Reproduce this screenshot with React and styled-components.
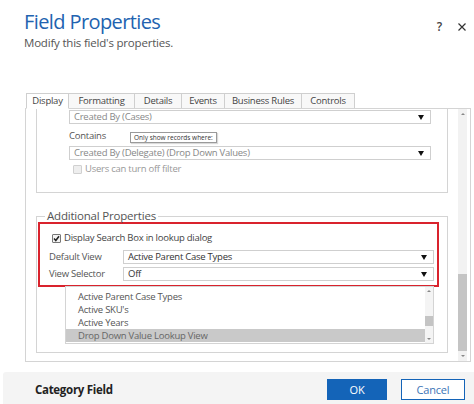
import React from "react";
import styled, { createGlobalStyle } from "styled-components";

const Global = createGlobalStyle`
  html, body { margin: 0; padding: 0; background: #fff; }
  body { font-family: "Open Sans", "Noto Sans", sans-serif; }
  * { box-sizing: border-box; }
`;

const Frame = styled.div`
  width: 474px;
  height: 404px;
  overflow: hidden;
  background: #fff;
  display: flex;
  flex-direction: column;
  color: #555;
  letter-spacing: -0.25px;
`;

const Header = styled.header`
  display: flex;
  justify-content: space-between;
  align-items: flex-start;
  padding: 9px 8px 0 24px;
  height: 92px;
`;

const Title = styled.h1`
  margin: 0;
  font-weight: 400;
  font-size: 20px;
  line-height: 26px;
  letter-spacing: -0.6px;
  color: #2263b0;
`;

const Subtitle = styled.p`
  margin: 0;
  font-size: 11.5px;
  line-height: 15px;
  letter-spacing: -0.2px;
  color: #555;
`;

const HeaderIcons = styled.div`
  display: flex;
  gap: 16px;
  margin-top: 12px;
  align-items: center;
`;

const IconButton = styled.span`
  font-size: 12px;
  font-weight: 600;
  line-height: 12px;
  color: #444;
  display: flex;
  align-items: center;
`;

const TabRow = styled.div`
  display: flex;
  padding-left: 27px;
  height: 16px;
  align-items: flex-end;
`;

const Tab = styled.div`
  width: ${(p) => p.$w}px;
  height: ${(p) => (p.$active ? "16px" : "15px")};
  border: 1px solid #cfcfcf;
  border-bottom: ${(p) => (p.$active ? "1px solid #fff" : "none")};
  margin-left: -1px;
  background: ${(p) => (p.$active ? "#fff" : "#f8f8f8")};
  font-size: 9.5px;
  line-height: 14px;
  text-align: center;
  color: #444;
  position: relative;
  z-index: ${(p) => (p.$active ? 2 : 1)};
  margin-bottom: ${(p) => (p.$active ? "-1px" : "0")};
`;

const Panel = styled.div`
  margin-left: 25px;
  width: 446px;
  height: 254px;
  border: 1px solid #d4d4d4;
  display: flex;
  overflow: hidden;
`;

const ScrollArea = styled.div`
  width: 431px;
  padding-left: 10px;
  display: flex;
  flex-direction: column;
`;

const FilterBox = styled.div`
  width: 412px;
  height: 84px;
  border: 1px solid #d4d4d4;
  border-top: none;
  padding: 1px 0 0 32px;
  display: flex;
  flex-direction: column;
`;

const Select = styled.div`
  width: ${(p) => p.$w}px;
  height: 14px;
  border: 1px solid #cfcfcf;
  background: #fff;
  display: flex;
  align-items: center;
  justify-content: space-between;
  padding: 0 6px 0 4px;
  font-size: 9.5px;
  line-height: 12px;
  color: ${(p) => (p.$muted ? "#888" : "#333")};
`;

const Arrow = styled.span`
  width: 0;
  height: 0;
  border-left: 3px solid transparent;
  border-right: 3px solid transparent;
  border-top: 5px solid #111;
`;

const FieldLabel = styled.div`
  position: relative;
  font-size: 9.5px;
  line-height: 14px;
  color: #555;
  margin: 5px 0 3px;
`;

const Tooltip = styled.span`
  position: absolute;
  left: 61px;
  top: 3px;
  height: 11px;
  padding: 0 3px;
  border: 1px solid #9a9a9a;
  background: #fff;
  font-size: 6.5px;
  line-height: 9px;
  letter-spacing: 0;
  color: #333;
  box-shadow: 1px 1px 1px rgba(0, 0, 0, 0.15);
  white-space: nowrap;
`;

const CheckRow = styled.label`
  display: flex;
  align-items: center;
  gap: 3px;
  height: 12px;
  margin: ${(p) => p.$m};
  font-size: 9.5px;
  line-height: 12px;
  color: ${(p) => (p.$disabled ? "#999" : "#444")};
`;

const Box = styled.span`
  width: 9px;
  height: 9px;
  border: 1px solid ${(p) => (p.$disabled ? "#d0d0d0" : "#777")};
  background: ${(p) => (p.$disabled ? "#eee" : "#f4f4f4")};
  border-radius: 1px;
  display: flex;
  align-items: center;
  justify-content: center;
`;

const Fieldset = styled.fieldset`
  margin: 17px 0 0 0;
  padding: 0;
  width: 412px;
  height: 143px;
  border: 1px solid #d4d4d4;
`;

const Legend = styled.legend`
  margin-left: 8px;
  padding: 0 2px;
  font-size: 11.5px;
  line-height: 12px;
  letter-spacing: -0.2px;
  color: #555;
`;

const Highlight = styled.div`
  margin: 0 0 0 1px;
  width: 401px;
  height: 65px;
  border: 2px solid #d9232d;
  padding: 8px 3px 0 9px;
  display: flex;
  flex-direction: column;
`;

const FormRow = styled.div`
  display: flex;
  align-items: center;
  margin-top: ${(p) => p.$mt}px;
`;

const RowLabel = styled.span`
  width: 74px;
  font-size: 9.5px;
  line-height: 12px;
  color: #555;
`;

const ListBox = styled.div`
  margin: -1px 0 0 28px;
  width: 369px;
  height: 58px;
  border: 1px solid #d4d4d4;
  display: flex;
  background: #fff;
`;

const ListItems = styled.ul`
  flex: 1;
  list-style: none;
  margin: 0;
  padding: 3px 0 0 0;
`;

const ListItem = styled.li`
  height: 13px;
  padding-left: 12px;
  font-size: 9.5px;
  line-height: 13px;
  color: ${(p) => (p.$selected ? "#666" : "#555")};
  background: ${(p) => (p.$selected ? "#c9c9c9" : "transparent")};
`;

const ScrollTrack = styled.div`
  width: ${(p) => p.$w}px;
  display: flex;
  flex-direction: column;
  align-items: center;
  background: ${(p) => p.$bg};
  margin: ${(p) => p.$m};
`;

const ArrowSlot = styled.div`
  height: ${(p) => p.$h}px;
  display: flex;
  align-items: center;
  justify-content: center;
`;

const TinyArrow = styled.span`
  width: 0;
  height: 0;
  border-left: 2px solid transparent;
  border-right: 2px solid transparent;
  ${(p) => (p.$up ? "border-bottom: 2px solid #888;" : "border-top: 2px solid #888;")}
`;

const Spacer = styled.div`
  flex: 1;
`;

const Thumb = styled.div`
  width: 100%;
  height: ${(p) => p.$h}px;
  background: #c4c4c4;
  margin-bottom: ${(p) => p.$mb || 0}px;
`;

const Footer = styled.footer`
  margin: 10px 0 0 3px;
  height: 32px;
  background: #f4f4f4;
  display: flex;
  align-items: center;
  padding: 3px 9px 0 32px;
  border-top-left-radius: 3px;
`;

const FooterTitle = styled.span`
  flex: 1;
  font-size: 11.5px;
  font-weight: 700;
  letter-spacing: -0.3px;
  color: #222;
`;

const Button = styled.button`
  height: 21px;
  width: ${(p) => p.$w}px;
  margin-left: ${(p) => p.$ml}px;
  border: 1px solid #1464b8;
  background: ${(p) => (p.$primary ? "#1464b8" : "#fff")};
  color: ${(p) => (p.$primary ? "#fff" : "#3b74b6")};
  font-family: inherit;
  font-size: 11px;
  letter-spacing: -0.2px;
  padding: 0;
`;

const tabs = [
  { label: "Display", w: 43, active: true },
  { label: "Formatting", w: 67 },
  { label: "Details", w: 48 },
  { label: "Events", w: 44 },
  { label: "Business Rules", w: 78 },
  { label: "Controls", w: 54 },
];

const views = ["Active Parent Case Types", "Active SKU's", "Active Years", "Drop Down Value Lookup View"];

export default function App() {
  return (
    <Frame>
      <Global />
      <Header>
        <div>
          <Title>Field Properties</Title>
          <Subtitle>Modify this field's properties.</Subtitle>
        </div>
        <HeaderIcons>
          <IconButton>?</IconButton>
          <IconButton>
            <svg width="8" height="8" viewBox="0 0 8 8">
              <path d="M0.5 0.5 L7.5 7.5 M7.5 0.5 L0.5 7.5" stroke="#333" strokeWidth="1.2" />
            </svg>
          </IconButton>
        </HeaderIcons>
      </Header>

      <TabRow>
        {tabs.map((t) => (
          <Tab key={t.label} $active={t.active} $w={t.w}>
            {t.label}
          </Tab>
        ))}
      </TabRow>

      <Panel>
        <ScrollArea>
          <FilterBox>
            <Select $w={362} $muted>
              Created By (Cases)
              <Arrow />
            </Select>
            <FieldLabel>
              Contains
              <Tooltip>Only show records where:</Tooltip>
            </FieldLabel>
            <Select $w={362} $muted>
              Created By (Delegate) (Drop Down Values)
              <Arrow />
            </Select>
            <CheckRow $disabled $m="3px 0 0 4px">
              <Box $disabled />
              Users can turn off filter
            </CheckRow>
          </FilterBox>

          <Fieldset>
            <Legend>Additional Properties</Legend>
            <Highlight>
              <CheckRow $m="0 0 0 3px">
                <Box>
                  <svg width="7" height="7" viewBox="0 0 7 7">
                    <path d="M1 3.5 L2.8 5.5 L6 1.2" stroke="#222" strokeWidth="1.5" fill="none" />
                  </svg>
                </Box>
                Display Search Box in lookup dialog
              </CheckRow>
              <FormRow $mt={6}>
                <RowLabel>Default View</RowLabel>
                <Select $w={311}>
                  Active Parent Case Types
                  <Arrow />
                </Select>
              </FormRow>
              <FormRow $mt={3}>
                <RowLabel>View Selector</RowLabel>
                <Select $w={311}>
                  Off
                  <Arrow />
                </Select>
              </FormRow>
            </Highlight>
            <ListBox>
              <ListItems>
                {views.map((v, i) => (
                  <ListItem key={v} $selected={i === views.length - 1}>
                    {v}
                  </ListItem>
                ))}
              </ListItems>
              <ScrollTrack $w={8} $bg="#f4f4f4" $m="0">
                <ArrowSlot $h={8}>
                  <TinyArrow $up />
                </ArrowSlot>
                <Spacer />
                <Thumb $h={10} $mb={9} />
                <ArrowSlot $h={8}>
                  <TinyArrow />
                </ArrowSlot>
              </ScrollTrack>
            </ListBox>
          </Fieldset>
        </ScrollArea>
        <ScrollTrack $w={9} $bg="#f2f2f2" $m="0 0 0 1px">
          <ArrowSlot $h={10}>
            <TinyArrow $up />
          </ArrowSlot>
          <Spacer />
          <Thumb $h={77} />
          <ArrowSlot $h={10}>
            <TinyArrow />
          </ArrowSlot>
        </ScrollTrack>
      </Panel>

      <Footer>
        <FooterTitle>Category Field</FooterTitle>
        <Button $primary $w={60} $ml={0}>OK</Button>
        <Button $w={64} $ml={14}>Cancel</Button>
      </Footer>
    </Frame>
  );
}
